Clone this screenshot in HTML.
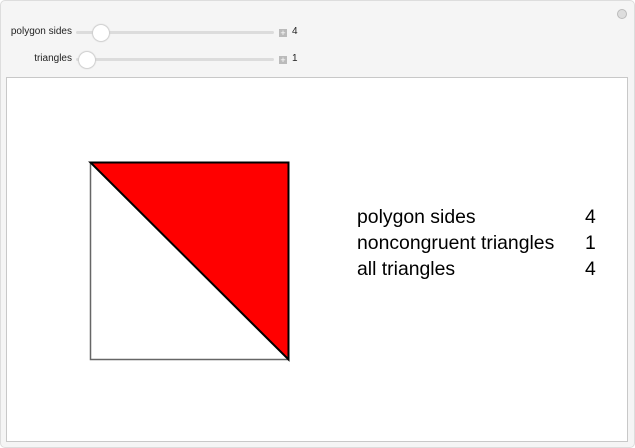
<!DOCTYPE html>
<html><head><style>
body{margin:0;width:635px;height:448px;background:#fff;font-family:"Liberation Sans",Arial,sans-serif;position:relative;overflow:hidden}
.outer{position:absolute;left:0;top:0;width:633px;height:446px;border:1px solid #ddd;border-radius:5px;background:#f5f5f5}
.lbl{position:absolute;font-size:10px;color:#222;text-align:right;width:72px;left:0}
.track{position:absolute;left:76px;width:198px;height:3px;background:#dcdcdc;border-radius:2px}
.knob{position:absolute;width:16px;height:16px;border-radius:50%;background:#fff;box-shadow:0 0 1px 1px #ccc}
.pl{position:absolute;left:279px;width:8px;height:8px;background:#bbb;color:#fff;font-size:9px;line-height:8px;text-align:center}
.val{position:absolute;left:292px;font-size:10px;color:#222}
.inner{position:absolute;left:6px;top:77px;width:620px;height:363px;background:#fff;border:1px solid #c8c8c8}
.t{position:absolute;font-size:19.4px;color:#000}
</style></head><body>
<div class="outer"></div>
<div style="position:absolute;left:617px;top:9px;width:8px;height:8px;border-radius:50%;border:1px solid #bbb;background:#ddd"></div>
<div class="lbl" style="top:26px">polygon sides</div>
<div class="track" style="top:31px"></div>
<div class="knob" style="left:93px;top:25px"></div>
<div class="pl" style="top:29px">+</div>
<div class="val" style="top:26px">4</div>
<div class="lbl" style="top:53px">triangles</div>
<div class="track" style="top:58px"></div>
<div class="knob" style="left:79px;top:52px"></div>
<div class="pl" style="top:56px">+</div>
<div class="val" style="top:53px">1</div>
<div class="inner"></div>
<svg style="position:absolute;left:0;top:0" width="635" height="448">
<rect x="90.5" y="162.5" width="198" height="197" fill="#fff" stroke="#666" stroke-width="1.5"/>
<polygon points="90.5,162.5 288.5,162.5 288.5,359.5" fill="#f00" stroke="#000" stroke-width="2"/>
</svg>
<div class="t" style="left:357px;top:206px">polygon sides</div>
<div class="t" style="left:357px;top:232px">noncongruent triangles</div>
<div class="t" style="left:357px;top:258px">all triangles</div>
<div class="t" style="left:585px;top:206px">4</div>
<div class="t" style="left:585px;top:232px">1</div>
<div class="t" style="left:585px;top:258px">4</div>
</body></html>
